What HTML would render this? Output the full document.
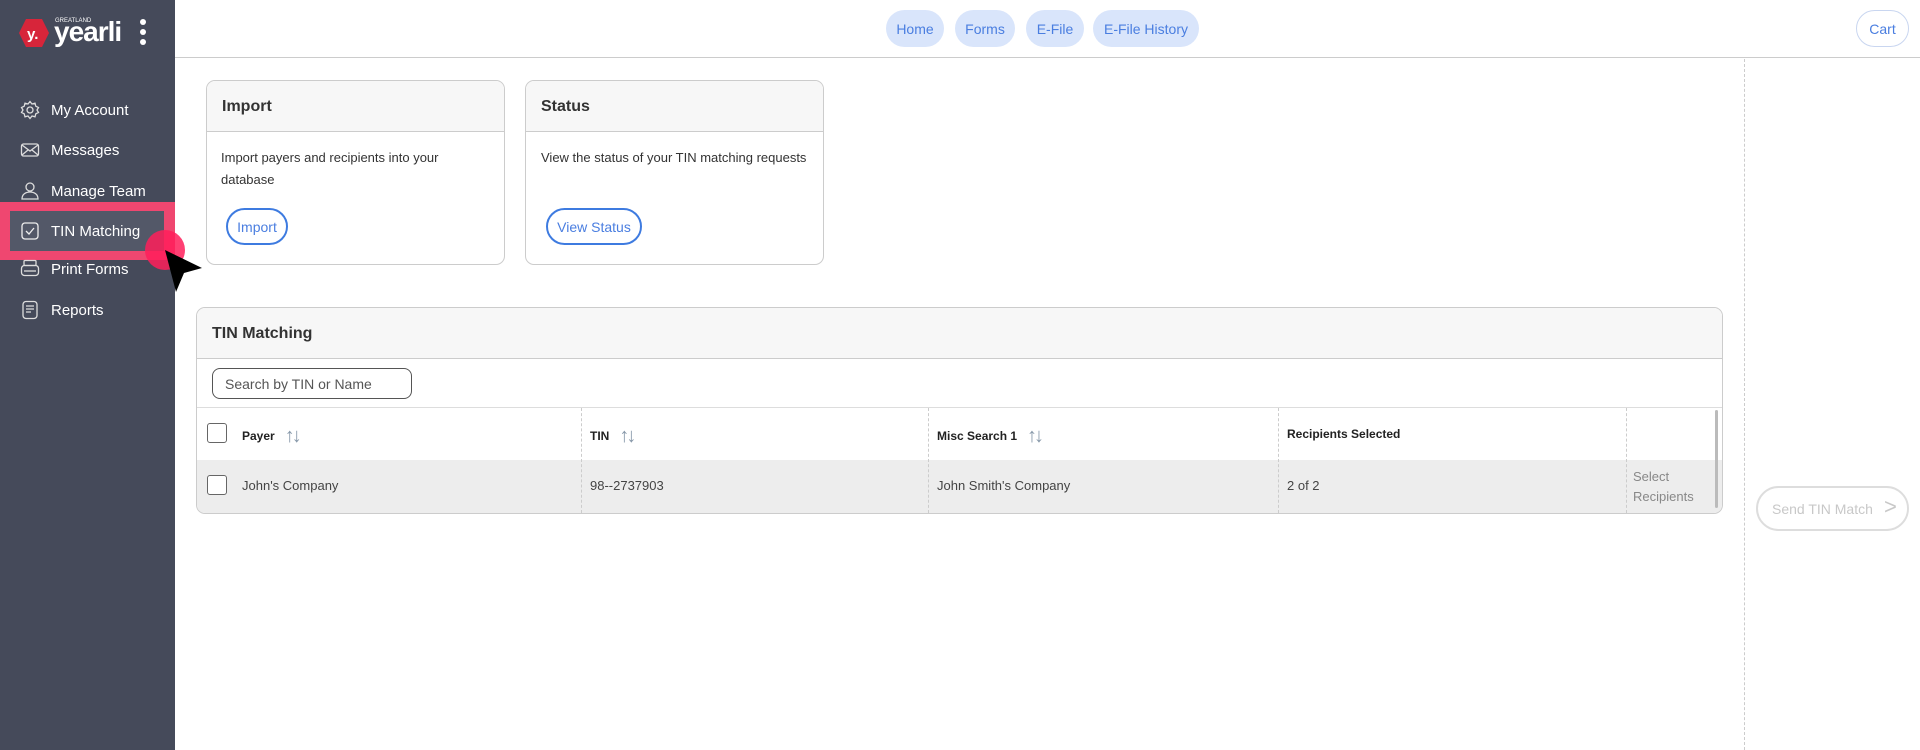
<!DOCTYPE html>
<html><head><meta charset="utf-8"><style>
*{box-sizing:border-box;margin:0;padding:0}
body{width:1920px;height:750px;overflow:hidden;background:#fff;font-family:"Liberation Sans",Arial,sans-serif;position:relative;color:#333}
.side{position:absolute;left:0;top:0;width:175px;height:750px;background:#454a5a}
.item{position:absolute;left:20px;color:#fff;font-size:15px;display:flex;align-items:center;height:24px}
.item svg{width:20px;height:20px;margin-right:11px}
.top{position:absolute;left:175px;top:0;right:0;height:58px;border-bottom:1px solid #ccc}
.pill{position:absolute;top:10px;height:37px;border-radius:19px;background:#d9e5fb;color:#4a7ee0;font-size:14px;display:flex;align-items:center;justify-content:center}
.card{position:absolute;border:1px solid #ccc;border-radius:9px;background:#fff;overflow:hidden}
.ch{height:51px;background:#f7f7f7;border-bottom:1px solid #ccc;font-weight:bold;font-size:16px;padding:17px 15px;color:#333}
.btn{position:absolute;border:2px solid #3e7be0;border-radius:19px;color:#4a7ee0;font-size:14px;display:flex;align-items:center;justify-content:center;height:37px}
.txt{position:absolute;font-size:13px;color:#333;line-height:22px}
.col{position:absolute;top:100px;height:105px;border-left:1px dashed #ccc}
.hd{position:absolute;top:133px;font-size:12px;font-weight:bold;color:#222}
.rw{position:absolute;top:170px;font-size:13px;color:#444}
.cb{position:absolute;left:10px;width:20px;height:20px;border:1px solid #666;border-radius:3px;background:#fff}
.arr{color:#8899aa;font-size:20px;font-weight:normal;margin-left:10px;letter-spacing:-3px;vertical-align:-2px}
</style></head><body>
<div class="side">
 <svg style="position:absolute;left:18px;top:18px" width="32" height="30" viewBox="0 0 32 30"><polygon points="8,1 24,1 31,15 24,29 8,29 1,15" fill="#d7253a"/><text x="9" y="21" fill="#fff" font-size="15" font-weight="bold" font-family="Liberation Sans">y.</text></svg>
 <div style="position:absolute;left:54px;top:20px;color:#fff;font-size:28px;font-weight:bold;letter-spacing:-1px;line-height:24px">yearli</div>
 <div style="position:absolute;left:55px;top:18px;color:#fff;font-size:6px">GREATLAND</div>
 <div style="position:absolute;left:140px;top:19px;width:6px;height:6px;border-radius:3px;background:#fff;box-shadow:0 10px 0 #fff,0 20px 0 #fff"></div>
 <div class="item" style="top:98px"><svg viewBox="0 0 20 20" fill="none" stroke="#ddd" stroke-width="1.3"><circle cx="10" cy="10" r="3"/><path d="M10 1.5l2 2.5 3-.8.8 3 2.7 1.3-1.5 2.5 1.5 2.5-2.7 1.3-.8 3-3-.8-2 2.5-2-2.5-3 .8-.8-3L1.5 12.5 3 10 1.5 7.5 4.2 6.2l.8-3 3 .8z"/></svg>My Account</div>
 <div class="item" style="top:138px"><svg viewBox="0 0 20 20" fill="none" stroke="#ddd" stroke-width="1.3"><rect x="1.5" y="4" width="17" height="12" rx="2"/><path d="M2 5l8 6 8-6M2 15l6-5M18 15l-6-5"/></svg>Messages</div>
 <div class="item" style="top:179px"><svg viewBox="0 0 20 20" fill="none" stroke="#ddd" stroke-width="1.3"><circle cx="10" cy="6" r="4"/><path d="M2 18c0-5 4-7 8-7s8 2 8 7z"/></svg>Manage Team</div>
 <div style="position:absolute;left:0;top:202px;width:175px;height:58px;background:#ef4770"></div>
 <div style="position:absolute;left:10px;top:211px;width:154px;height:40px;background:#535868"></div>
 <div class="item" style="top:219px"><svg viewBox="0 0 20 20" fill="none" stroke="#eee" stroke-width="1.3"><rect x="2" y="2" width="16" height="16" rx="3"/><path d="M6 10l3 3 5-6"/></svg>TIN Matching</div>
 <div class="item" style="top:257px"><svg viewBox="0 0 20 20" fill="none" stroke="#ddd" stroke-width="1.3"><rect x="4" y="1.5" width="12" height="5" rx="1"/><rect x="1.5" y="6.5" width="17" height="10" rx="3"/><path d="M4 12h12"/></svg>Print Forms</div>
 <div class="item" style="top:298px"><svg viewBox="0 0 20 20" fill="none" stroke="#ddd" stroke-width="1.3"><rect x="3" y="1.5" width="14" height="17" rx="3"/><path d="M6 6h8M6 9h8M6 12h5"/></svg>Reports</div>
</div>
<div style="position:absolute;left:145px;top:230px;width:40px;height:40px;border-radius:20px;background:rgba(255,30,90,.85)"></div>
<svg style="position:absolute;left:160px;top:248px" width="50" height="48" viewBox="0 0 50 48"><polygon points="5,2 42,20 24,25 16,44" fill="#000"/></svg>
<div class="top"></div>
<div class="pill" style="left:886px;width:58px">Home</div>
<div class="pill" style="left:955px;width:60px">Forms</div>
<div class="pill" style="left:1026px;width:58px">E-File</div>
<div class="pill" style="left:1093px;width:106px">E-File History</div>
<div class="pill" style="left:1856px;width:53px;background:#fff;border:1px solid #c9d6f0">Cart</div>
<div style="position:absolute;left:1744px;top:59px;height:691px;border-left:1px dashed #ccc"></div>
<div class="card" style="left:206px;top:80px;width:299px;height:185px"><div class="ch">Import</div>
 <div class="txt" style="left:14px;top:66px">Import payers and recipients into your<br>database</div>
 <div class="btn" style="left:19px;top:127px;width:62px">Import</div></div>
<div class="card" style="left:525px;top:80px;width:299px;height:185px"><div class="ch">Status</div>
 <div class="txt" style="left:15px;top:66px">View the status of your TIN matching requests</div>
 <div class="btn" style="left:20px;top:127px;width:96px">View Status</div></div>
<div class="card" style="left:196px;top:307px;width:1527px;height:207px">
 <div class="ch" style="font-size:16px">TIN Matching</div>
 <div style="position:absolute;left:15px;top:60px;width:200px;height:31px;border:1px solid #555;border-radius:8px;font-size:14px;color:#555;padding:7px 12px">Search by TIN or Name</div>
 <div style="position:absolute;left:0;top:99px;width:100%;border-top:1px solid #ddd"></div>
 <div style="position:absolute;left:0;top:152px;width:100%;height:55px;background:#ededed"></div>
 <div class="col" style="left:384px"></div><div class="col" style="left:731px"></div><div class="col" style="left:1081px"></div><div class="col" style="left:1429px"></div>
 <div style="position:absolute;left:1518px;top:102px;width:3px;height:98px;background:#bbb;border-radius:2px"></div>
 <div class="cb" style="top:115px"></div><div class="cb" style="top:167px"></div>
 <div class="hd" style="left:45px;top:117px">Payer<span class="arr">↑↓</span></div>
 <div class="hd" style="left:393px;top:117px">TIN<span class="arr">↑↓</span></div>
 <div class="hd" style="left:740px;top:117px">Misc Search 1<span class="arr">↑↓</span></div>
 <div class="hd" style="left:1090px;top:119px;font-size:12px">Recipients Selected</div>
 <div class="rw" style="left:45px">John's Company</div>
 <div class="rw" style="left:393px">98--2737903</div>
 <div class="rw" style="left:740px">John Smith's Company</div>
 <div class="rw" style="left:1090px">2 of 2</div>
 <div class="rw" style="left:1436px;top:159px;color:#888;line-height:20px;font-size:13px">Select<br>Recipients</div>
</div>
<div style="position:absolute;left:1756px;top:486px;width:153px;height:45px;border:2px solid #ddd;border-radius:23px;color:#c8c8c8;font-size:14px;padding:13px 0 0 14px">Send TIN Match <span style="font-size:22px;position:absolute;top:6px;left:126px">&gt;</span></div>
</body></html>
